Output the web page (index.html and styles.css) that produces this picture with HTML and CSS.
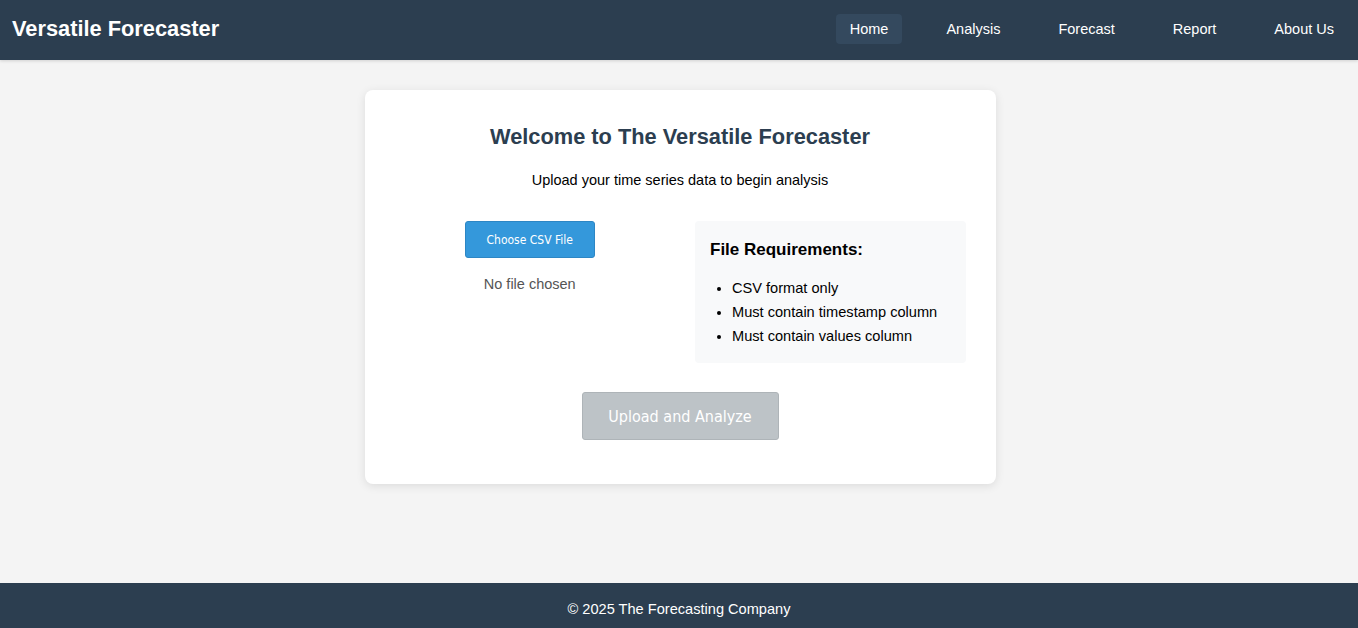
FILE: index.html
```html
<!DOCTYPE html>
<html lang="en">
<head>
  <meta charset="UTF-8" />
  <meta name="viewport" content="width=device-width, initial-scale=1.0" />
  <title>Versatile Forecaster</title>
  <link rel="stylesheet" href="styles.css">
</head>
<body>
  <header class="navbar">
    <div class="brand">Versatile Forecaster</div>
    <nav class="nav-links">
      <a href="#" class="active">Home</a>
      <a href="#">Analysis</a>
      <a href="#">Forecast</a>
      <a href="#">Report</a>
      <a href="#">About Us</a>
    </nav>
  </header>

  <main class="content">
    <div class="card">
      <h2>Welcome to The Versatile Forecaster</h2>
      <p class="subtitle">Upload your time series data to begin analysis</p>

      <div class="upload-section">
        <div class="file-picker">
          <button class="choose-btn">Choose CSV File</button>
          <span class="file-name">No file chosen</span>
        </div>
        <div class="requirements">
          <h3>File Requirements:</h3>
          <ul>
            <li>CSV format only</li>
            <li>Must contain timestamp column</li>
            <li>Must contain values column</li>
          </ul>
        </div>
      </div>

      <div class="actions">
        <button class="upload-btn" disabled>Upload and Analyze</button>
      </div>
    </div>
  </main>

  <footer class="footer">
    &copy; 2025 The Forecasting Company
  </footer>
</body>
</html>
```

FILE: styles.css
```css
html, body {
  height: 100%;
}
body {
  margin: 0;
  font-family: 'Liberation Sans', Arial, sans-serif;
  background: #f4f4f4;
  color: #000;
  display: flex;
  flex-direction: column;
}
.navbar {
  background: #2c3e50;
  color: white;
  height: 60px;
  padding: 0 10px 0 12px;
  display: flex;
  align-items: center;
  justify-content: space-between;
  box-shadow: 0 1px 3px rgba(0, 0, 0, 0.15);
  flex-shrink: 0;
}
.brand {
  font-size: 21.8px;
  font-weight: bold;
  margin-top: -2px;
}
.nav-links {
  display: flex;
  gap: 30px;
  margin-top: -3px;
}
.nav-links a {
  color: white;
  text-decoration: none;
  font-size: 14.5px;
  padding: 7px 14px;
  border-radius: 4px;
}
.nav-links a.active {
  background: #34495e;
}
.content {
  flex: 1;
  padding: 30px 0;
}
.card {
  width: 571px;
  margin: 0 auto;
  background: white;
  border-radius: 8px;
  padding: 30px 30px 44px;
  box-shadow: 0 2px 10px rgba(0, 0, 0, 0.1);
  text-align: center;
  position: relative;
  left: 1px;
}
.card h2 {
  margin: 4px 0 0;
  font-size: 21.8px;
  color: #2c3e50;
}
.subtitle {
  margin: 22px 0 0;
  font-size: 14.5px;
}
.upload-section {
  display: grid;
  grid-template-columns: 1fr 1fr;
  gap: 30px;
  margin-top: 33px;
  text-align: left;
}
.file-picker {
  display: flex;
  flex-direction: column;
  align-items: center;
}
.choose-btn {
  background: #3498db;
  color: white;
  border: 1px solid #2d86c4;
  border-radius: 3px;
  width: 130px;
  height: 37px;
  font-family: 'DejaVu Sans Condensed', 'DejaVu Sans', sans-serif;
  font-size: 12px;
  cursor: pointer;
}
.file-name {
  margin-top: 18px;
  color: #555;
  font-size: 14.5px;
}
.requirements {
  background: #f8f9fa;
  border-radius: 4px;
  padding: 15px;
}
.requirements h3 {
  margin: 4px 0 0;
  font-size: 17px;
}
.requirements ul {
  margin: 16px 0 0;
  padding-left: 22px;
}
.requirements li {
  font-size: 14.6px;
  line-height: 24px;
}
.actions {
  margin-top: 29px;
}
.upload-btn {
  background: #bdc3c7;
  color: white;
  border: 1px solid #aeb4b8;
  border-radius: 3px;
  width: 197px;
  height: 48px;
  font-family: 'DejaVu Sans Condensed', 'DejaVu Sans', sans-serif;
  font-size: 16px;
}
.footer {
  background: #2c3e50;
  color: white;
  text-align: center;
  height: 45px;
  line-height: 52px;
  font-size: 14.6px;
  flex-shrink: 0;
}
```
